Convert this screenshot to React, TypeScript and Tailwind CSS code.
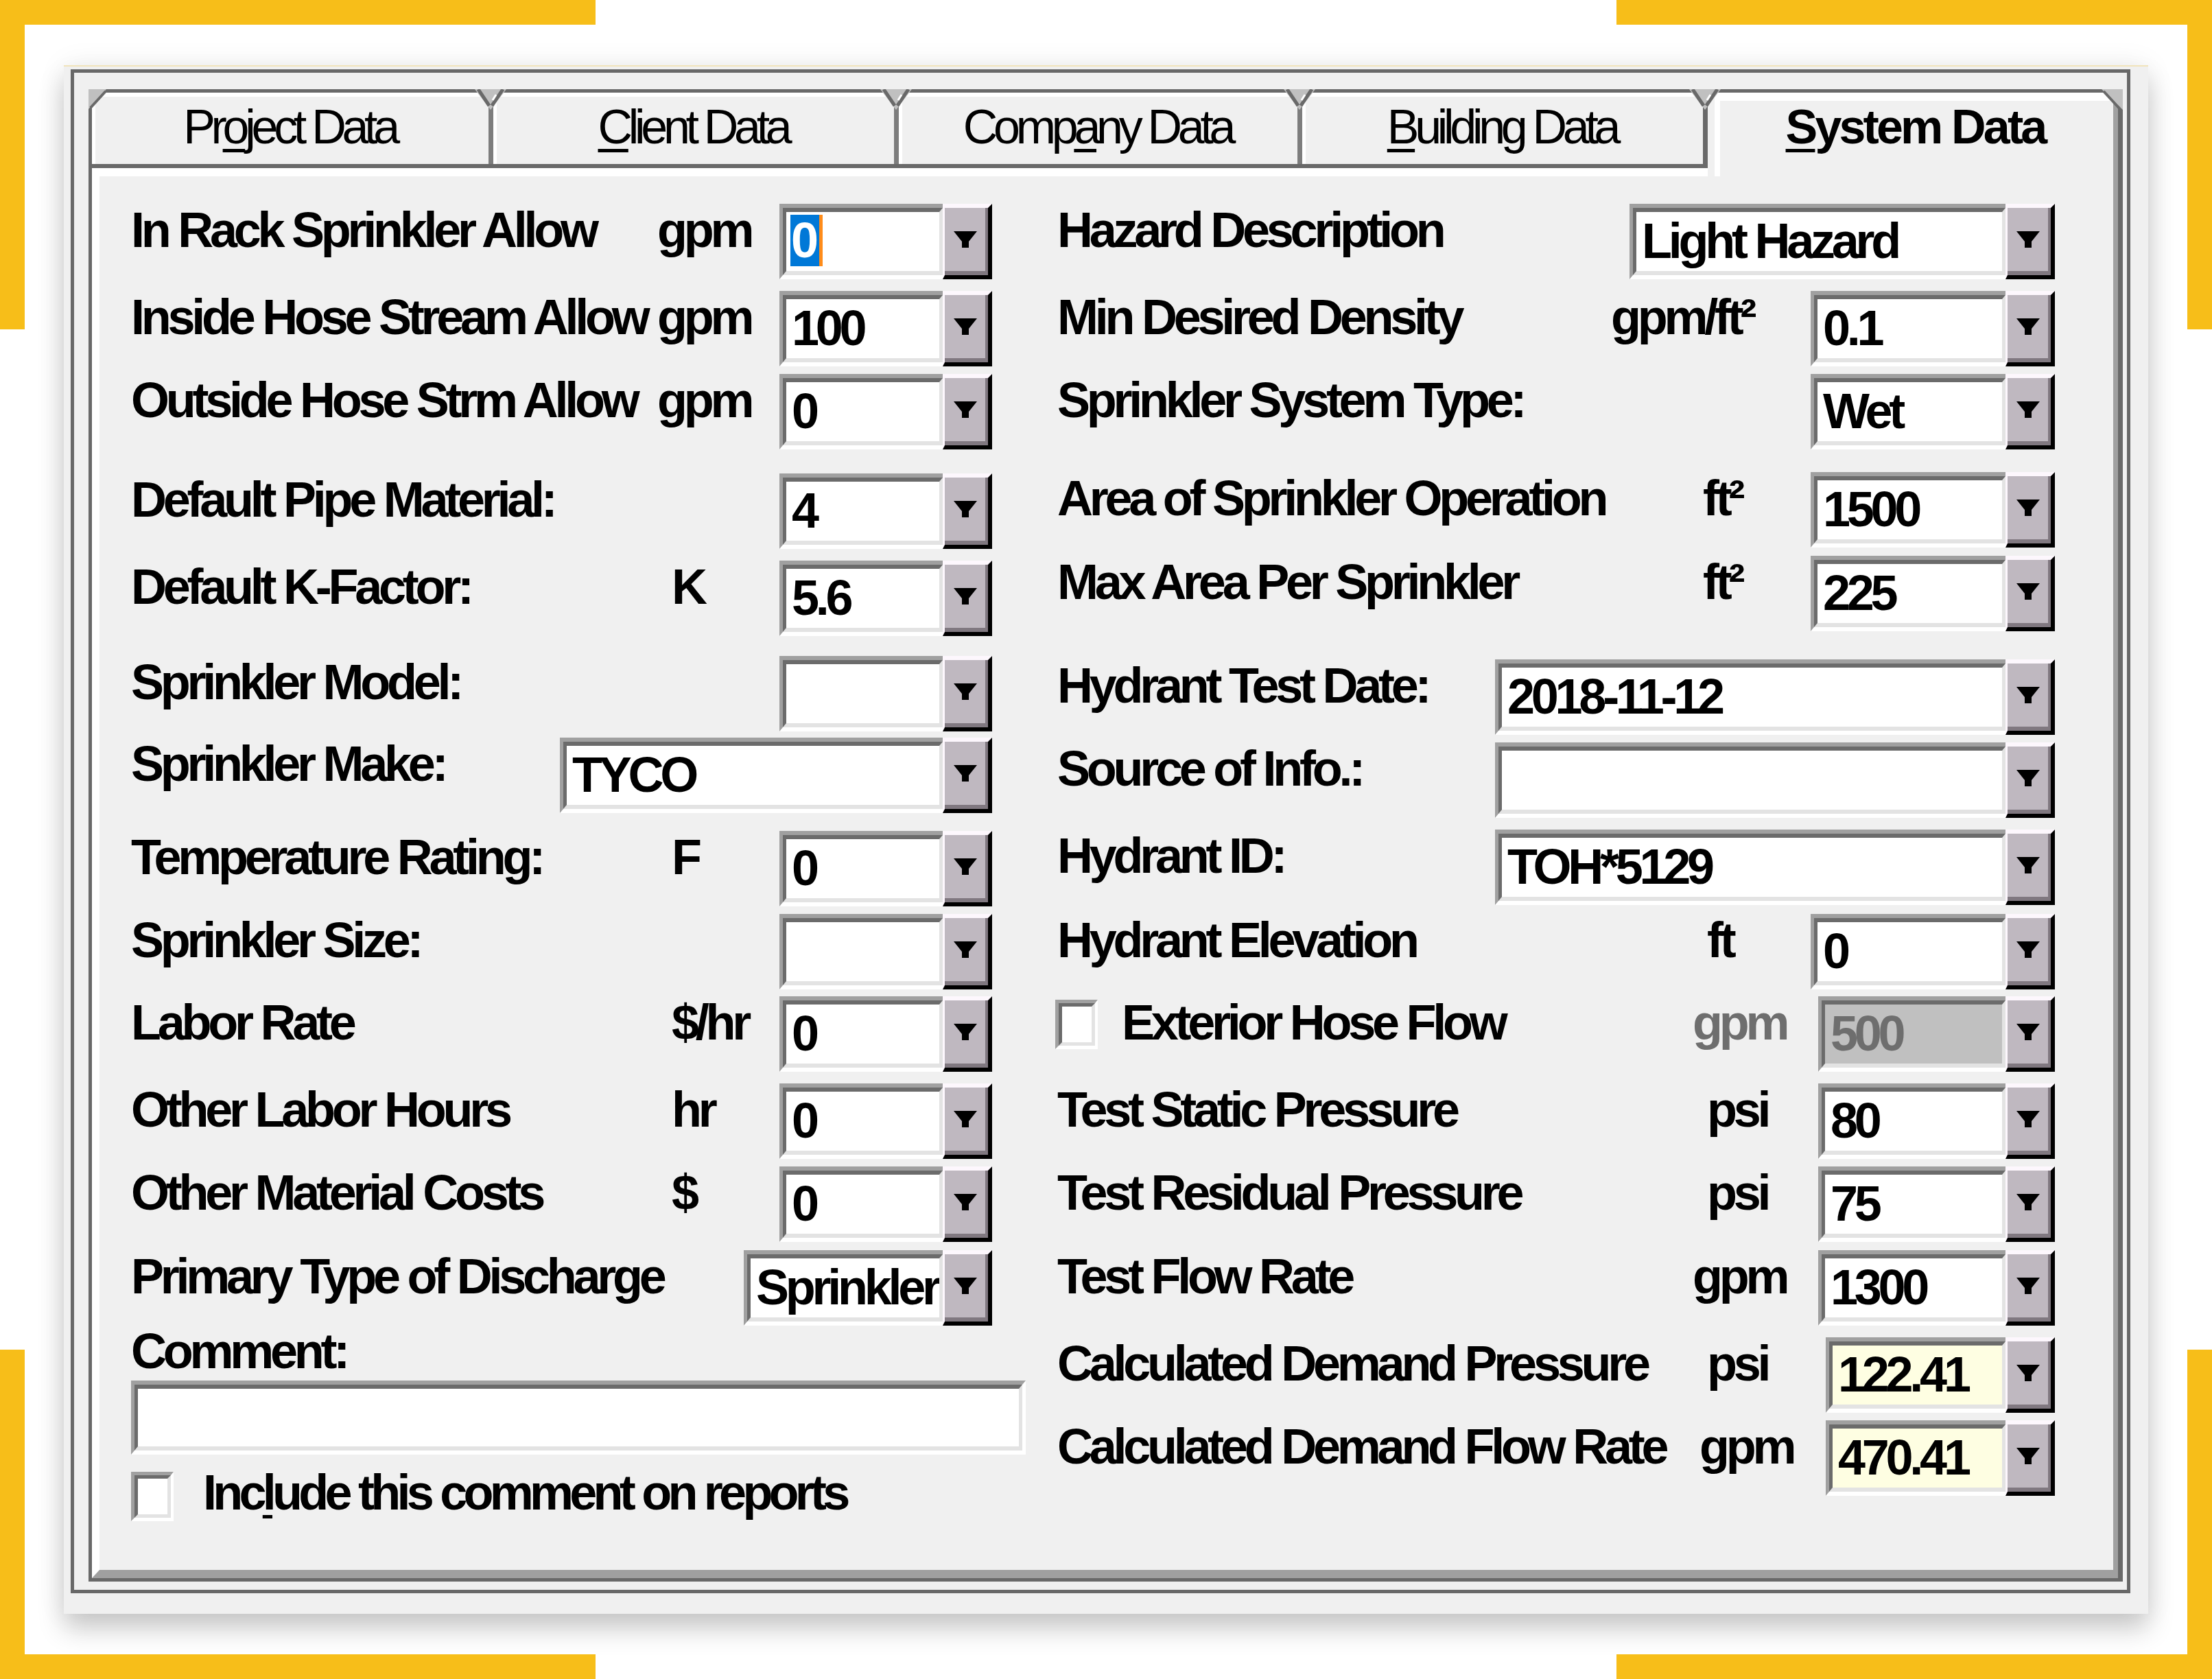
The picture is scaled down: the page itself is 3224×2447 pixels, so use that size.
import React from "react";

const Arrow = () => (
  <svg width="34" height="24" viewBox="0 0 34 24" className="block">
    <path d="M0 0H34L22 15V24H12V15Z" fill="#000" />
  </svg>
);

function DropButton() {
  return (
    <div className="w-[72px] h-full shrink-0 border-t-[6px] border-l-[3px] border-r-[6px] border-b-[6px] border-black border-t-[#fdf7fd] border-l-[#fdf7fd]">
      <div className="h-full bg-[#bfb8c0] border-r-[4px] border-b-[6px] border-[#807880] flex items-center justify-center">
        <Arrow />
      </div>
    </div>
  );
}

type ComboProps = {
  value?: string;
  width: string;
  tone?: "white" | "disabled" | "yellow";
  selected?: boolean;
};

function Combo({ value = "", width, tone = "white", selected = false }: ComboProps) {
  const fill =
    tone === "disabled"
      ? "bg-[#c0c0c0] text-[#6e6e6e]"
      : tone === "yellow"
      ? "bg-[#fefee2]"
      : "bg-white";
  return (
    <div className="flex h-[110px] shrink-0">
      <div className={`${width} h-full shrink-0 border-t-[6px] border-l-[5px] border-b-[6px] border-[#a0a0a0] border-b-white`}>
        <div
          className={`h-full border-t-[6px] border-l-[5px] border-r-[5px] border-b-[6px] border-[#6b6b6b] border-r-[#e3e3e3] border-b-[#e3e3e3] ${fill} overflow-hidden whitespace-nowrap pl-[8px]`}
        >
          {selected ? (
            <div className="mt-[4px] -ml-[2px] w-fit h-[75px] leading-[75px] tracking-normal bg-[#0078d7] text-white border-r-[5px] border-[#ff8c1a] px-[1px]">
              {value}
            </div>
          ) : (
            <div className="pt-[8px] leading-[69px]">{value}</div>
          )}
        </div>
      </div>
      <DropButton />
    </div>
  );
}

function Label({ w, children, tone = "" }: { w: string; children?: React.ReactNode; tone?: string }) {
  return (
    <div className={`${w} shrink-0 mt-[4px] leading-[69px] whitespace-nowrap ${tone}`}>{children}</div>
  );
}

function Row({ mt, children }: { mt: string; children: React.ReactNode }) {
  return <div className={`flex items-start h-[110px] ${mt}`}>{children}</div>;
}

function Check() {
  return (
    <div className="w-[62px] h-[72px] shrink-0 border-t-[5px] border-l-[5px] border-r-[4px] border-b-[5px] border-[#a0a0a0] border-r-white border-b-white">
      <div className="h-full bg-white border-t-[5px] border-l-[5px] border-r-[5px] border-b-[5px] border-[#6b6b6b] border-r-[#e3e3e3] border-b-[#e3e3e3]" />
    </div>
  );
}

const U = ({ children }: { children: React.ReactNode }) => (
  <span className="underline decoration-[length:5px] underline-offset-[8px]">{children}</span>
);

function Tab({ w, divider, last, children }: { w: string; divider?: boolean; last?: boolean; children: React.ReactNode }) {
  return (
    <div className={`${w} shrink-0 flex flex-col`}>
      <div
        className={`h-[109px] border-t-[5px] border-[#696969] ${divider ? "border-l-[7px] border-l-[#7d7d7d]" : ""} ${last ? "border-r-[7px]" : ""}`}
      >
        <div className="h-full border-t-[6px] border-l-[5px] border-white flex justify-center pt-[9px] text-[70px] leading-[70px] font-normal tracking-[-0.09em] whitespace-nowrap">
          <span className="pr-[7px]">{children}</span>
        </div>
      </div>
      <div className="h-[6px] bg-[#696969]" />
      <div className="h-[12px] bg-white" />
    </div>
  );
}

function VNotch({ pos }: { pos: string }) {
  return (
    <svg className={`absolute top-0 ${pos}`} width="46" height="30" viewBox="0 0 46 30">
      <polygon points="0,0 46,0 23,30" fill="#c0c0c0" />
      <polyline points="5,0 21,24" stroke="#696969" strokeWidth="5" fill="none" />
      <polyline points="41,0 25,24" stroke="#696969" strokeWidth="5" fill="none" />
      <polyline points="31,8 26,16" stroke="#ffffff" strokeWidth="3" fill="none" />
    </svg>
  );
}

export default function App() {
  return (
    <div className="relative w-[3224px] h-[2447px] overflow-hidden bg-white pl-[93px] pt-[95px] font-['Liberation_Sans',Arial,sans-serif] text-[72px] font-bold tracking-[-0.073em] text-black">
      {/* dialog window */}
      <div className="w-[3038px] h-[2257px] bg-[#f0f0f0] border-t-[2px] border-[#f1e4bb] shadow-[0_22px_36px_rgba(0,0,0,0.2),0_0_40px_rgba(0,0,0,0.07)]">
        <div className="w-[3002px] h-[2221px] ml-[10px] mt-[4px] border-[5px] border-[#686868]">
          <div className="w-[2965px] h-[2175px] ml-[21px] mt-[24px] flex flex-col border-l-[5px] border-r-[7px] border-b-[5px] border-[#696969]">
            {/* tabs */}
            <div className="relative flex h-[127px] shrink-0">
              <Tab w="w-[578px]">
                Pr<U>o</U>ject Data
              </Tab>
              <Tab w="w-[591px]" divider>
                <U>C</U>lient Data
              </Tab>
              <Tab w="w-[588px]" divider>
                Comp<U>a</U>ny Data
              </Tab>
              <Tab w="w-[598px]" divider last>
                <U>B</U>uilding Data
              </Tab>
              <div className="flex-1 border-t-[5px] border-[#696969] pl-[10px]">
                <div className="h-full border-t-[12px] border-l-[8px] border-white border-r-[7px] border-r-[#a0a0a0] flex justify-center pt-[3px] text-[70px] leading-[70px] tracking-[-0.055em] whitespace-nowrap">
                  <span className="pr-[4px]">
                    <U>S</U>ystem Data
                  </span>
                </div>
              </div>
              <svg className="absolute top-0 -left-[5px]" width="26" height="29" viewBox="0 0 26 29">
                <polygon points="0,0 26,0 0,29" fill="#c0c0c0" />
                <polyline points="25,3 3,27" stroke="#696969" strokeWidth="4" fill="none" />
              </svg>
              <VNotch pos="left-[558px]" />
              <VNotch pos="left-[1149px]" />
              <VNotch pos="left-[1737px]" />
              <VNotch pos="left-[2328px]" />
              <svg className="absolute top-0 left-[2929px]" width="31" height="30" viewBox="0 0 31 30">
                <polygon points="0,0 31,0 31,30" fill="#c0c0c0" />
                <polyline points="3,3 26,28" stroke="#696969" strokeWidth="4" fill="none" />
              </svg>
            </div>

            {/* panel body */}
            <div className="flex-1 flex gap-[46px] border-l-[11px] border-white border-r-[7px] border-r-[#a0a0a0] border-b-[12px] border-b-[#a0a0a0] pl-[46px] pt-[40px]">
              {/* left column */}
              <div className="w-[1304px] shrink-0 flex flex-col">
                <Row mt="mt-0">
                  <Label w="w-[767px]">In Rack Sprinkler Allow</Label>
                  <Label w="w-[178px]">gpm</Label>
                  <Combo width="w-[238px]" value="0" selected />
                </Row>
                <Row mt="mt-[17px]">
                  <Label w="w-[767px]">Inside Hose Stream Allow</Label>
                  <Label w="w-[178px]">gpm</Label>
                  <Combo width="w-[238px]" value="100" />
                </Row>
                <Row mt="mt-[11px]">
                  <Label w="w-[767px]">Outside Hose Strm Allow</Label>
                  <Label w="w-[178px]">gpm</Label>
                  <Combo width="w-[238px]" value="0" />
                </Row>
                <Row mt="mt-[35px]">
                  <Label w="w-[945px]">Default Pipe Material:</Label>
                  <Combo width="w-[238px]" value="4" />
                </Row>
                <Row mt="mt-[17px]">
                  <Label w="w-[788px]">Default K-Factor:</Label>
                  <Label w="w-[157px]">K</Label>
                  <Combo width="w-[238px]" value="5.6" />
                </Row>
                <Row mt="mt-[29px]">
                  <Label w="w-[945px]">Sprinkler Model:</Label>
                  <Combo width="w-[238px]" />
                </Row>
                <Row mt="mt-[9px]">
                  <Label w="w-[625px]">Sprinkler Make:</Label>
                  <Combo width="w-[558px]" value="TYCO" />
                </Row>
                <Row mt="mt-[26px]">
                  <Label w="w-[788px]">Temperature Rating:</Label>
                  <Label w="w-[157px]">F</Label>
                  <Combo width="w-[238px]" value="0" />
                </Row>
                <Row mt="mt-[11px]">
                  <Label w="w-[945px]">Sprinkler Size:</Label>
                  <Combo width="w-[238px]" />
                </Row>
                <Row mt="mt-[10px]">
                  <Label w="w-[788px]">Labor Rate</Label>
                  <Label w="w-[157px]">$/hr</Label>
                  <Combo width="w-[238px]" value="0" />
                </Row>
                <Row mt="mt-[17px]">
                  <Label w="w-[788px]">Other Labor Hours</Label>
                  <Label w="w-[157px]">hr</Label>
                  <Combo width="w-[238px]" value="0" />
                </Row>
                <Row mt="mt-[11px]">
                  <Label w="w-[788px]">Other Material Costs</Label>
                  <Label w="w-[157px]">$</Label>
                  <Combo width="w-[238px]" value="0" />
                </Row>
                <Row mt="mt-[12px]">
                  <Label w="w-[893px]">Primary Type of Discharge</Label>
                  <Combo width="w-[290px]" value="Sprinkler" />
                </Row>

                <div className="mt-[3px] leading-[69px]">Comment:</div>
                <div className="mt-[8px] w-[1304px] h-[108px] border-t-[6px] border-l-[5px] border-r-[5px] border-b-[6px] border-[#a0a0a0] border-r-white border-b-white">
                  <div className="h-full bg-white border-t-[6px] border-l-[5px] border-r-[5px] border-b-[6px] border-[#6b6b6b] border-r-[#e3e3e3] border-b-[#e3e3e3]" />
                </div>
                <div className="mt-[25px] flex items-start gap-[43px]">
                  <Check />
                  <div className="-mt-[4px] leading-[69px] whitespace-nowrap tracking-[-0.08em]">
                    Inc<U>l</U>ude this comment on reports
                  </div>
                </div>
              </div>

              {/* right column */}
              <div className="w-[1454px] shrink-0 flex flex-col">
                <Row mt="mt-0">
                  <Label w="w-[834px]">Hazard Description</Label>
                  <Combo width="w-[548px]" value="Light Hazard" />
                </Row>
                <Row mt="mt-[17px]">
                  <Label w="w-[807px]">Min Desired Density</Label>
                  <Label w="w-[291px]">gpm/ft²</Label>
                  <Combo width="w-[284px]" value="0.1" />
                </Row>
                <Row mt="mt-[11px]">
                  <Label w="w-[1098px]">Sprinkler System Type:</Label>
                  <Combo width="w-[284px]" value="Wet" />
                </Row>
                <Row mt="mt-[33px]">
                  <Label w="w-[941px]">Area of Sprinkler Operation</Label>
                  <Label w="w-[157px]">ft²</Label>
                  <Combo width="w-[284px]" value="1500" />
                </Row>
                <Row mt="mt-[12px]">
                  <Label w="w-[941px]">Max Area Per Sprinkler</Label>
                  <Label w="w-[157px]">ft²</Label>
                  <Combo width="w-[284px]" value="225" />
                </Row>
                <Row mt="mt-[41px]">
                  <Label w="w-[638px]">Hydrant Test Date:</Label>
                  <Combo width="w-[744px]" value="2018-11-12" />
                </Row>
                <Row mt="mt-[11px]">
                  <Label w="w-[638px]">Source of Info.:</Label>
                  <Combo width="w-[744px]" />
                </Row>
                <Row mt="mt-[17px]">
                  <Label w="w-[638px]">Hydrant ID:</Label>
                  <Combo width="w-[744px]" value="TOH*5129" />
                </Row>
                <Row mt="mt-[13px]">
                  <Label w="w-[947px]">Hydrant Elevation</Label>
                  <Label w="w-[151px]">ft</Label>
                  <Combo width="w-[284px]" value="0" />
                </Row>
                <Row mt="mt-[10px]">
                  <div className="w-[97px] shrink-0 mt-[5px] -ml-[3px]">
                    <Check />
                  </div>
                  <Label w="w-[832px]">Exterior Hose Flow</Label>
                  <Label w="w-[183px]" tone="text-[#6e6e6e]">
                    gpm
                  </Label>
                  <Combo width="w-[273px]" value="500" tone="disabled" />
                </Row>
                <Row mt="mt-[17px]">
                  <Label w="w-[947px]">Test Static Pressure</Label>
                  <Label w="w-[162px]">psi</Label>
                  <Combo width="w-[273px]" value="80" />
                </Row>
                <Row mt="mt-[11px]">
                  <Label w="w-[947px]">Test Residual Pressure</Label>
                  <Label w="w-[162px]">psi</Label>
                  <Combo width="w-[273px]" value="75" />
                </Row>
                <Row mt="mt-[12px]">
                  <Label w="w-[926px]">Test Flow Rate</Label>
                  <Label w="w-[183px]">gpm</Label>
                  <Combo width="w-[273px]" value="1300" />
                </Row>
                <Row mt="mt-[17px]">
                  <Label w="w-[947px]">Calculated Demand Pressure</Label>
                  <Label w="w-[173px]">psi</Label>
                  <Combo width="w-[262px]" value="122.41" tone="yellow" />
                </Row>
                <Row mt="mt-[11px]">
                  <Label w="w-[936px]">Calculated Demand Flow Rate</Label>
                  <Label w="w-[184px]">gpm</Label>
                  <Combo width="w-[262px]" value="470.41" tone="yellow" />
                </Row>
              </div>
            </div>
          </div>
        </div>
      </div>

      {/* yellow corner brackets */}
      <div className="absolute left-0 top-0 w-[868px] h-[36px] bg-[#f7be19]" />
      <div className="absolute left-0 top-0 w-[36px] h-[480px] bg-[#f7be19]" />
      <div className="absolute right-0 top-0 w-[868px] h-[36px] bg-[#f7be19]" />
      <div className="absolute right-0 top-0 w-[36px] h-[480px] bg-[#f7be19]" />
      <div className="absolute left-0 bottom-0 w-[868px] h-[36px] bg-[#f7be19]" />
      <div className="absolute left-0 bottom-0 w-[36px] h-[480px] bg-[#f7be19]" />
      <div className="absolute right-0 bottom-0 w-[868px] h-[36px] bg-[#f7be19]" />
      <div className="absolute right-0 bottom-0 w-[36px] h-[480px] bg-[#f7be19]" />
    </div>
  );
}
